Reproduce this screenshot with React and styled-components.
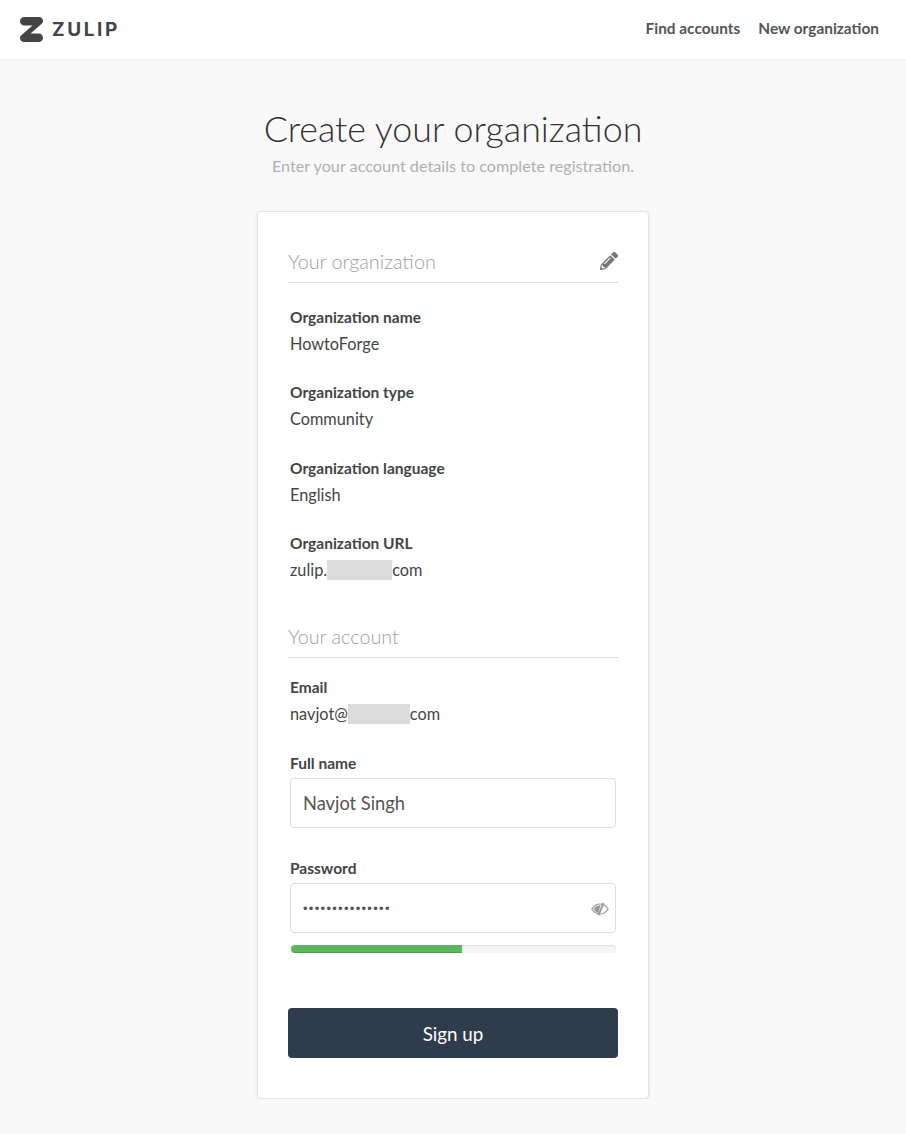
import React from 'react';
import styled, { createGlobalStyle } from 'styled-components';
import { FaPencilAlt } from 'react-icons/fa';

const GlobalStyle = createGlobalStyle`
    html, body {
        margin: 0;
        padding: 0;
        background: #f9f9f9;
        font-family: "Lato", "Open Sans", sans-serif;
        color: #444;
    }
    * { box-sizing: border-box; }
`;

const Header = styled.header`
    display: flex;
    align-items: center;
    justify-content: space-between;
    height: 59px;
    padding: 0 27px 0 20px;
    background: #fff;
    box-shadow: 0 0 3px rgba(0, 0, 0, 0.12);
`;

const Brand = styled.div`
    display: flex;
    align-items: center;
    gap: 9px;
    font-family: "Inter", sans-serif;
    font-weight: 700;
    font-size: 19px;
    letter-spacing: 2.6px;
    color: #444;
`;

const Nav = styled.nav`
    display: flex;
    gap: 18px;
    padding-bottom: 4px;
`;

const NavLink = styled.a`
    font-size: 15.4px;
    font-weight: 700;
    color: #555;
`;

const Main = styled.main`
    display: flex;
    flex-direction: column;
    align-items: center;
    padding-top: 44px;
`;

const Title = styled.h1`
    margin: 0;
    font-size: 35.8px;
    line-height: 51px;
    font-weight: 300;
    color: #333;
`;

const Subtitle = styled.p`
    margin: 0 0 33px;
    font-size: 16.2px;
    line-height: 24px;
    color: #b0b0b0;
`;

const Card = styled.section`
    width: 392px;
    height: 888px;
    padding: 30px;
    background: #fff;
    border: 1px solid #e4e4e4;
    border-radius: 4px;
    box-shadow: 0 1px 3px rgba(0, 0, 0, 0.1);
`;

const SectionHead = styled.div`
    display: flex;
    align-items: center;
    justify-content: space-between;
    height: 41px;
    padding-bottom: 3px;
    margin-bottom: ${p => p.$gap}px;
    font-size: 19.8px;
    font-weight: 300;
    color: #a0a0a0;
    border-bottom: 1px solid #ddd;
`;

const Field = styled.div`
    margin: 0 2px ${p => p.$gap ?? 22.4}px;
`;

const Label = styled.div`
    font-size: 15.5px;
    line-height: 26px;
    font-weight: 700;
    color: #444;
`;

const Value = styled.div`
    font-size: 16.3px;
    line-height: 27px;
    color: #444;
`;

const Redacted = styled.span`
    display: inline-block;
    width: ${p => p.$w}px;
    height: 20px;
    vertical-align: -4px;
    background: #dcdcdc;
`;

const InputBox = styled.div`
    position: relative;
    display: flex;
    align-items: center;
    height: 50px;
    margin-top: 2px;
    padding: 0 12px;
    font-size: 18.3px;
    color: #555;
    background: #fff;
    border: 1px solid #ddd;
    border-radius: 4px;
`;

const Dots = styled.span`
    font-family: "Liberation Sans", sans-serif;
    font-size: 13px;
    letter-spacing: 1.3px;
    color: #555;
`;

const EyeSlot = styled.span`
    position: absolute;
    right: 6px;
    top: 18px;
    display: flex;
`;

const Meter = styled.div`
    height: 8px;
    margin: 12px 0 0 1px;
    overflow: hidden;
    background: #f5f5f5;
    border-radius: 4px;
    box-shadow: inset 0 1px 2px rgba(0, 0, 0, 0.1);
`;

const MeterBar = styled.div`
    height: 100%;
    background: #5cb85c;
    box-shadow: inset 0 -1px 0 rgba(0, 0, 0, 0.15);
`;

const Submit = styled.button`
    display: block;
    width: 100%;
    height: 50px;
    margin-top: 55px;
    font-family: inherit;
    font-size: 18.8px;
    color: #fff;
    background: #2f3c4b;
    border: 0;
    border-radius: 4px;
`;

const LogoMark = () => (
    <svg width="23" height="25" viewBox="0 0 23 25" fill="#444">
        <path d="M4.250 0H19a4 4 0 0 1 3 6.600L10.500 16.500h8.250a4.250 4.250 0 0 1 0 8.500H4a4 4 0 0 1-3-6.600L12.500 8.500H4.250a4.250 4.250 0 0 1 0-8.500z" />
    </svg>
);

const EyeOff = () => (
    <svg width="18" height="14" viewBox="0 0 18 14" fill="none">
        <path d="M.8 7C3 3.600 6 2 9 2s6 1.600 8.200 5C15 10.400 12 12 9 12S3 10.400.8 7z" stroke="#999" strokeWidth="1.200" />
        <path d="M2.500 7C4 4.800 6.500 3.200 9.500 3.200L7.500 11C5.500 10.400 3.800 9 2.500 7z" fill="#999" />
        <path d="M12.500.8L7.500 13.400" stroke="#999" strokeWidth="1.800" />
    </svg>
);

const orgFields = [
    ['Organization name', 'HowtoForge'],
    ['Organization type', 'Community'],
    ['Organization language', 'English'],
];

export default function App() {
    return (
        <>
            <GlobalStyle />
            <Header>
                <Brand><LogoMark />ZULIP</Brand>
                <Nav>
                    <NavLink>Find accounts</NavLink>
                    <NavLink>New organization</NavLink>
                </Nav>
            </Header>
            <Main>
                <Title>Create your organization</Title>
                <Subtitle>Enter your account details to complete registration.</Subtitle>
                <Card>
                    <SectionHead $gap={21}>
                        Your organization
                        <FaPencilAlt size={18} color="#777" />
                    </SectionHead>
                    {orgFields.map(([label, value]) => (
                        <Field key={label}>
                            <Label>{label}</Label>
                            <Value>{value}</Value>
                        </Field>
                    ))}
                    <Field $gap={34}>
                        <Label>Organization URL</Label>
                        <Value>zulip.<Redacted $w={65} />com</Value>
                    </Field>
                    <SectionHead $gap={16}>Your account</SectionHead>
                    <Field $gap={23}>
                        <Label>Email</Label>
                        <Value>navjot@<Redacted $w={62} />com</Value>
                    </Field>
                    <Field $gap={27}>
                        <Label>Full name</Label>
                        <InputBox>Navjot Singh</InputBox>
                    </Field>
                    <Field $gap={0}>
                        <Label>Password</Label>
                        <InputBox>
                            <Dots>•••••••••••••••</Dots>
                            <EyeSlot><EyeOff /></EyeSlot>
                        </InputBox>
                        <Meter><MeterBar style={{ width: '52.6%' }} /></Meter>
                    </Field>
                    <Submit>Sign up</Submit>
                </Card>
            </Main>
        </>
    );
}
